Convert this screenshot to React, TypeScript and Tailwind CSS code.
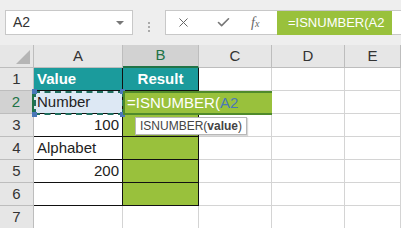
import { X, Check } from 'lucide-react'

const cols = ['A', 'B', 'C', 'D', 'E']

function Cell({ children, className = '' }: { children?: React.ReactNode; className?: string }) {
  return <div className={`h-[23px] flex items-center border-r border-b border-[#d4d4d4] overflow-hidden whitespace-nowrap ${className}`}>{children}</div>
}

export default function App() {
  return (
    <div className="relative w-[401px] h-[228px] overflow-hidden bg-white text-[#222]" style={{ fontFamily: '"Liberation Sans", Arial, sans-serif' }}>
      {/* formula bar */}
      <div className="h-[45px] bg-[#eeeeee] pt-[10px] flex">
        <div className="ml-[5px] w-[128px] h-[25px] bg-white border border-[#c8c8c8] flex items-center justify-between pl-[7px] pr-[8px]">
          <span className="text-[14px] text-[#333]">A2</span>
          <span className="w-0 h-0 border-l-[4px] border-r-[4px] border-t-[4px] border-l-transparent border-r-transparent border-t-[#777]" />
        </div>
        <div className="w-[32px] flex flex-col items-center justify-center gap-[2px] -mt-[2px]">
          <span className="w-[2px] h-[2px] bg-[#aaa]" />
          <span className="w-[2px] h-[2px] bg-[#aaa]" />
          <span className="w-[2px] h-[2px] bg-[#aaa]" />
        </div>
        <div className="flex-1 h-[25px] bg-white border border-r-0 border-[#c8c8c8] flex items-center">
          <div className="w-[111px] flex items-center pl-[10px]">
            <X size={15} strokeWidth={1.6} className="text-[#666]" />
            <Check size={15} strokeWidth={2.6} className="text-[#777] ml-[25px]" />
            <span className="text-[14px] italic text-[#666] ml-[20px]" style={{ fontFamily: '"Liberation Serif", serif' }}>f<span className="text-[10px]">x</span></span>
          </div>
          <div className="h-[24px] w-[115px] bg-[#99c13c] flex items-center pl-[11px] text-white text-[13px]">=ISNUMBER(A2</div>
        </div>
      </div>

      {/* grid */}
      <div className="grid grid-cols-[34px_89px_76px_73px_73px_1fr]">
        <div className="h-[23px] bg-[#e6e6e6] border-r border-b border-[#bdbdbd] relative">
          <span className="absolute right-[3px] bottom-[3px] w-0 h-0" style={{ borderBottom: '14px solid #b5b5b5', borderLeft: '14px solid transparent' }} />
        </div>
        {cols.map(c => (
          <div key={c} className={`h-[23px] flex items-center justify-center border-r border-b border-[#bdbdbd] text-[15px] ${c === 'B' ? 'bg-[#d2d2d2] text-[#217346] border-b-[2px] border-b-[#217346]' : 'bg-[#e6e6e6] text-[#333]'}`}>{c}</div>
        ))}

        {[1, 2, 3, 4, 5, 6, 7].map(r => (
          <Row key={r} r={r} />
        ))}
      </div>

      {/* A2 copy selection */}
      <div className="absolute left-[34px] top-[91px] w-[90px] h-[24px] border-2 border-dashed border-[#1f6f5f]" />
      <span className="absolute left-[32px] top-[89px] w-[5px] h-[5px] bg-[#4a78b8]" />
      <span className="absolute left-[120px] top-[89px] w-[5px] h-[5px] bg-[#4a78b8]" />
      <span className="absolute left-[32px] top-[112px] w-[5px] h-[5px] bg-[#4a78b8]" />
      <span className="absolute left-[120px] top-[112px] w-[5px] h-[5px] bg-[#4a78b8]" />

      {/* B2 editing */}
      <div className="absolute left-[123px] top-[91px] w-[149px] h-[24px] bg-[#99c13c] border-2 border-r-0 border-[#4f8a2b] flex items-center pl-[2px] text-[15px] text-white whitespace-nowrap">
        =ISNUMBER(<span className="text-[#4a78b8]">A2</span>
      </div>

      {/* tooltip */}
      <div className="absolute left-[135px] top-[117px] h-[18px] px-[4px] bg-white border border-[#b8b8b8] flex items-center text-[12px] text-[#444] whitespace-nowrap shadow-[1px_1px_1px_rgba(0,0,0,0.15)]">
        ISNUMBER(<b>value</b>)
      </div>
    </div>
  )
}

function Row({ r }: { r: number }) {
  const tbl = r <= 6
  const head = r === 1
  const a = { 1: 'Value', 2: 'Number', 3: '100', 4: 'Alphabet', 5: '200', 6: '' } as Record<number, string>
  return (
    <>
      <div className={`h-[23px] flex items-center justify-center border-r border-b border-[#bdbdbd] text-[15px] ${r === 2 ? 'bg-[#d2d2d2] text-[#217346] border-r-[2px] border-r-[#217346]' : 'bg-[#e6e6e6] text-[#333]'}`}>{r}</div>
      {tbl ? (
        <>
          <Cell className={`${head ? 'bg-[#1b9b9c] text-white font-bold' : r === 2 ? 'bg-[#dde8f4]' : ''} border-r-[#111] border-b-[#111] text-[15px] pl-[3px] pr-[3px] ${r === 3 || r === 5 ? 'justify-end' : ''}`}>{a[r]}</Cell>
          <Cell className={`${head ? 'bg-[#1b9b9c] text-white font-bold' : 'bg-[#99c13c]'} border-r-[#111] border-b-[#111] justify-center text-[15px]`}>{head ? 'Result' : ''}</Cell>
        </>
      ) : (
        <>
          <Cell />
          <Cell />
        </>
      )}
      <Cell />
      <Cell />
      <Cell />
    </>
  )
}
